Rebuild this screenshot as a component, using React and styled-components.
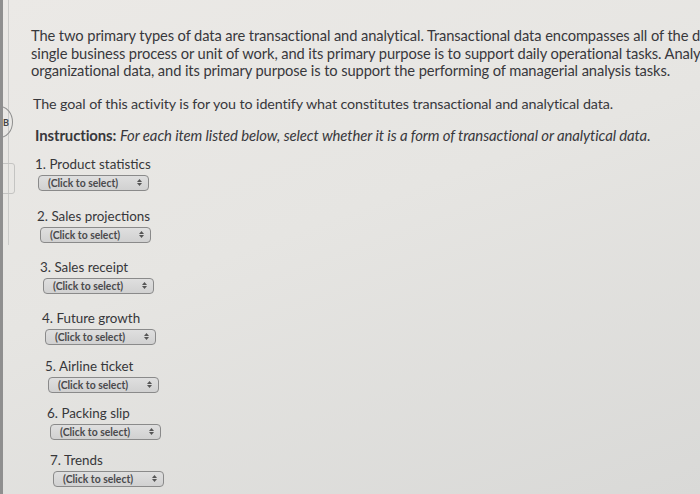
import React from 'react';
import styled, { createGlobalStyle } from 'styled-components';

const GlobalStyle = createGlobalStyle`
  html, body {
    margin: 0;
    padding: 0;
    width: 700px;
    height: 494px;
    overflow: hidden;
  }
  body {
    font-family: Lato, "Open Sans", sans-serif;
    color: #38383c;
  }
`;

const Page = styled.div`
  position: relative;
  width: 700px;
  height: 494px;
  overflow: hidden;
  background: linear-gradient(160deg, #ebe9e6 0%, #e6e5e2 45%, #d9d9d7 100%);
  border-left: 3px solid #8f8f8f;
  box-sizing: border-box;
`;

const SideRule = styled.div`
  position: absolute;
  left: 5px;
  top: 0;
  width: 1px;
  height: 245px;
  background: #cbcbc9;
`;

const SideBadge = styled.div`
  position: absolute;
  left: -16px;
  top: 106px;
  width: 26px;
  height: 32px;
  border: 1px solid #8e8e8e;
  border-radius: 50%;
  font-size: 9px;
  font-weight: 700;
  color: #444;
  display: flex;
  align-items: center;
  justify-content: flex-end;
  padding-right: 3px;
  box-sizing: border-box;
`;

const SideBox = styled.div`
  position: absolute;
  left: -6px;
  top: 163px;
  width: 16px;
  height: 29px;
  border: 1px solid #c4c4c2;
  border-radius: 3px;
`;

const Content = styled.div`
  padding-top: 27px;
  display: flex;
  flex-direction: column;
`;

const Paragraph = styled.p`
  margin: 0;
  padding-left: ${p => p.$indent}px;
  font-size: ${p => p.$size || 14.4}px;
  line-height: 17.5px;
  white-space: nowrap;
  letter-spacing: -0.1px;
`;

const Intro = styled(Paragraph)`
  margin-bottom: 15px;
`;

const Goal = styled(Paragraph)`
  margin-bottom: 15px;
`;

const Instructions = styled(Paragraph)`
  margin-bottom: 11px;
  b {
    font-weight: 700;
  }
  i {
    font-style: italic;
  }
`;

const Item = styled.div`
  padding-left: ${p => p.$indent}px;
  height: ${p => p.$height}px;
  display: flex;
  flex-direction: column;
  align-items: flex-start;
`;

const ItemLabel = styled.div`
  font-size: 13.4px;
  line-height: 17px;
  color: #37373a;
`;

const Select = styled.div`
  margin-left: 3px;
  margin-top: 2px;
  width: 111px;
  height: 16px;
  box-sizing: border-box;
  border: 1.5px solid #8a8a8a;
  border-radius: 4px;
  background: linear-gradient(#dfdfdf, #d1d1d1);
  display: flex;
  align-items: center;
  justify-content: space-between;
  padding: 0 6px 0 9px;
  font-family: Lato, sans-serif;
  font-size: 10.4px;
  font-weight: 700;
  color: #4a4a4c;
`;

const Arrows = styled.span`
  display: flex;
  flex-direction: column;
  align-items: center;
  gap: 1px;
  svg {
    display: block;
  }
`;

const items = [
  'Product statistics',
  'Sales projections',
  'Sales receipt',
  'Future growth',
  'Airline ticket',
  'Packing slip',
  'Trends',
];

const heights = [52, 51, 51, 48, 47, 47, 40];
const indents = [32, 34, 37, 39, 42, 44, 47];

export default function App() {
  return (
    <>
      <GlobalStyle />
      <Page>
        <SideRule />
        <SideBadge>B</SideBadge>
        <SideBox />
        <Content>
          <Intro $indent={28} $size={14.7}>
            The two primary types of data are transactional and analytical. Transactional data encompasses all of the data contained within a
            <br />
            single business process or unit of work, and its primary purpose is to support daily operational tasks. Analytical data encompasses all
            <br />
            organizational data, and its primary purpose is to support the performing of managerial analysis tasks.
          </Intro>
          <Goal $indent={30} $size={14.3}>
            The goal of this activity is for you to identify what constitutes transactional and analytical data.
          </Goal>
          <Instructions $indent={32} $size={14.9}>
            <b>Instructions:</b> <i>For each item listed below, select whether it is a form of transactional or analytical data.</i>
          </Instructions>
          {items.map((name, i) => (
            <Item key={name} $indent={indents[i]} $height={heights[i]}>
              <ItemLabel>{i + 1}. {name}</ItemLabel>
              <Select>
                <span>(Click to select)</span>
                <Arrows>
                  <svg width="5" height="3" viewBox="0 0 5 3"><path d="M0 3 L2.5 0 L5 3 Z" fill="#555" /></svg>
                  <svg width="5" height="3" viewBox="0 0 5 3"><path d="M0 0 L2.5 3 L5 0 Z" fill="#555" /></svg>
                </Arrows>
              </Select>
            </Item>
          ))}
        </Content>
      </Page>
    </>
  );
}
